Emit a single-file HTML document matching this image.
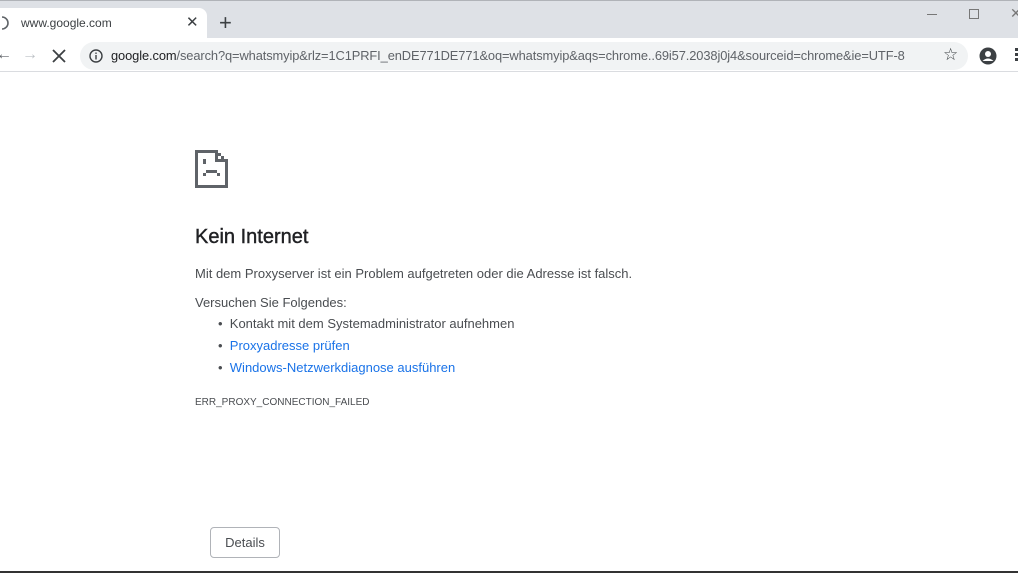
<!DOCTYPE html>
<html><head><meta charset="utf-8"><style>
*{margin:0;padding:0;box-sizing:border-box}
body{width:1018px;height:573px;overflow:hidden;background:#fff;font-family:"Liberation Sans",sans-serif;position:relative}
.a{position:absolute;white-space:nowrap}
.t{color:#4a4d51;font-size:13px}
</style></head><body>
<div class="a" style="left:0;top:0;width:1018px;height:38px;background:#dee1e6;border-top:1px solid #b0b3b8"></div>
<div class="a" style="left:-10px;top:8px;width:217px;height:31px;background:#fff;border-radius:8px 8px 0 0"></div>
<svg class="a" style="left:0;top:15px" width="14" height="16"><path d="M2 2 A6 6 0 0 1 2 14" fill="none" stroke="#5f6368" stroke-width="1.6"/></svg>
<div class="a" style="left:21px;top:16px;font-size:12px;color:#3c4043">www.google.com</div>
<div class="a" style="left:186px;top:13px;font-size:15px;color:#3c4043">✕</div>
<div class="a" style="left:219px;top:10px;font-size:22px;color:#3c4043">+</div>
<div class="a" style="left:927px;top:14px;width:10px;height:1px;background:#777"></div>
<div class="a" style="left:969px;top:9px;width:10px;height:10px;border:1px solid #777"></div>
<div class="a" style="left:1010px;top:5px;font-size:14px;color:#777">✕</div>
<div class="a" style="left:0;top:71px;width:1018px;height:1px;background:#dadce0"></div>
<div class="a" style="left:-4px;top:46px;font-size:16px;color:#5f6368">←</div>
<div class="a" style="left:22px;top:46px;font-size:16px;color:#bdc1c6">→</div>
<svg class="a" style="left:52px;top:49px" width="14" height="14"><path d="M1 1L13 13M13 1L1 13" stroke="#3c4043" stroke-width="1.8"/></svg>
<div class="a" style="left:80px;top:42px;width:888px;height:28px;background:#f1f3f4;border-radius:14px"></div>
<svg class="a" style="left:89px;top:49px" width="14" height="14"><circle cx="7" cy="7" r="6" fill="none" stroke="#3c4043" stroke-width="1.4"/><rect x="6.3" y="6" width="1.4" height="4.5" fill="#3c4043"/><rect x="6.3" y="3.5" width="1.4" height="1.4" fill="#3c4043"/></svg>
<div class="a" style="left:111px;top:48px;font-size:12.86px;color:#5f6368;letter-spacing:-0.1px"><span style="color:#202124">google.com</span>/search?q=whatsmyip&amp;rlz=1C1PRFI_enDE771DE771&amp;oq=whatsmyip&amp;aqs=chrome..69i57.2038j0j4&amp;sourceid=chrome&amp;ie=UTF-8</div>
<div class="a" style="left:943px;top:45px;font-size:17px;color:#3c4043">☆</div>
<svg class="a" style="left:979px;top:47px" width="18" height="18"><circle cx="9" cy="9" r="8.5" fill="#3c4043"/><circle cx="9" cy="7" r="3" fill="#fff"/><path d="M3.5 14 Q9 9 14.5 14" fill="#fff"/></svg>
<div class="a" style="left:1015px;top:48px;width:3px;height:3px;background:#3c4043;box-shadow:0 5px #3c4043,0 10px #3c4043"></div>
<svg class="a" style="left:195px;top:150px" width="34" height="38" fill="#5f6368">
<rect x="0" y="0" width="3" height="38"/><rect x="0" y="35" width="33" height="3"/><rect x="30" y="12" width="3" height="26"/><rect x="0" y="0" width="20" height="3"/>
<rect x="20" y="0" width="3" height="12"/><rect x="20" y="9" width="13" height="3"/><rect x="23" y="3" width="3" height="3"/><rect x="26" y="6" width="3" height="3"/>
<rect x="8" y="9" width="3" height="5"/><rect x="8" y="23" width="3" height="3"/><rect x="11" y="20" width="11" height="3"/><rect x="22" y="23" width="3" height="3"/></svg>
<div class="a" style="left:195px;top:226px;font-size:20px;color:#202124;-webkit-text-stroke:0.4px #202124">Kein Internet</div>
<div class="a t" style="left:195px;top:266px">Mit dem Proxyserver ist ein Problem aufgetreten oder die Adresse ist falsch.</div>
<div class="a t" style="left:195px;top:295px">Versuchen Sie Folgendes:</div>
<div class="a t" style="left:218px;top:316px">•&nbsp;&nbsp;Kontakt mit dem Systemadministrator aufnehmen</div>
<div class="a t" style="left:218px;top:338px">•&nbsp;&nbsp;<span style="color:#1a73e8">Proxyadresse prüfen</span></div>
<div class="a t" style="left:218px;top:360px">•&nbsp;&nbsp;<span style="color:#1a73e8">Windows-Netzwerkdiagnose ausführen</span></div>
<div class="a t" style="left:195px;top:397px;font-size:10px">ERR_PROXY_CONNECTION_FAILED</div>
<div class="a" style="left:210px;top:527px;width:70px;height:31px;border:1px solid #b0b3b8;border-radius:4px;font-size:13px;color:#4a4d51;text-align:center;line-height:29px">Details</div>
<div class="a" style="left:0;top:571px;width:1018px;height:2px;background:#333"></div>
</body></html>
